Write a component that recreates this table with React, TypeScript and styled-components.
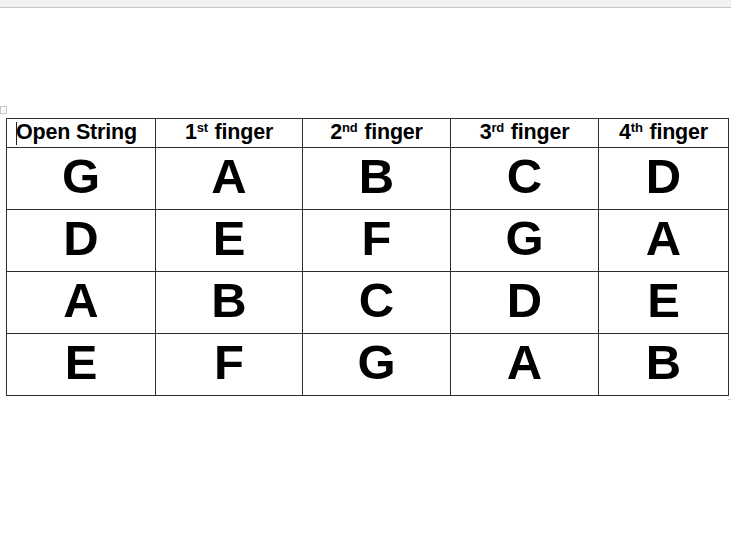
import React from "react";
import styled, { createGlobalStyle } from "styled-components";

const GlobalStyle = createGlobalStyle`
  html, body {
    margin: 0;
    padding: 0;
    background: #ffffff;
  }
  body {
    font-family: "Liberation Sans", Arial, sans-serif;
    color: #000;
  }
`;

const Page = styled.div`
  width: 731px;
  height: 548px;
  background: #ffffff;
  overflow: hidden;
`;

const TopBar = styled.div`
  height: 7px;
  background: #f2f2f2;
  border-bottom: 1px solid #c6c6c6;
`;

const Document = styled.div`
  padding: 110px 0 0 6px;
`;

const TableWrap = styled.div`
  position: relative;
  width: 722px;
`;

const MoveHandle = styled.div`
  position: absolute;
  left: -6px;
  top: -12px;
  width: 5px;
  height: 6px;
  border: 1px solid #c8c8c8;
  background: #fafafa;
`;

const ResizeHandle = styled.div`
  position: absolute;
  right: -4px;
  bottom: -4px;
  width: 3px;
  height: 3px;
  border-right: 1px solid #d0d0d0;
  border-bottom: 1px solid #d0d0d0;
`;

const Table = styled.table`
  border-collapse: collapse;
  table-layout: fixed;
  width: 722px;
`;

const HeaderCell = styled.th<{ $left?: boolean }>`
  position: relative;
  height: 26px;
  padding: 0 0 2px ${(p) => (p.$left ? "9px" : "0")};
  border: 1px solid #2e2e2e;
  font-size: 21.5px;
  font-weight: 700;
  letter-spacing: -0.2px;
  text-align: ${(p) => (p.$left ? "left" : "center")};
  vertical-align: middle;
  line-height: 26px;
  white-space: nowrap;
`;

const Sup = styled.sup`
  font-size: 13px;
  line-height: 0;
  vertical-align: 7px;
  margin-right: 1px;
`;

const Caret = styled.span`
  position: absolute;
  left: 9px;
  top: 3px;
  width: 1px;
  height: 23px;
  background: #222;
`;

const NoteCell = styled.td`
  height: 56px;
  padding: 0 0 5px;
  border: 1px solid #2e2e2e;
  font-size: 49px;
  font-weight: 700;
  text-align: center;
  vertical-align: middle;
  line-height: 56px;
`;

const headers = [
  { num: "", sup: "", label: "Open String" },
  { num: "1", sup: "st", label: " finger" },
  { num: "2", sup: "nd", label: " finger" },
  { num: "3", sup: "rd", label: " finger" },
  { num: "4", sup: "th", label: " finger" },
];

const rows = [
  ["G", "A", "B", "C", "D"],
  ["D", "E", "F", "G", "A"],
  ["A", "B", "C", "D", "E"],
  ["E", "F", "G", "A", "B"],
];

const widths = [149, 147, 148, 148, 130];

const App: React.FC = () => {
  return (
    <Page>
      <GlobalStyle />
      <TopBar />
      <Document>
        <TableWrap>
          <MoveHandle />
          <Table>
            <colgroup>
              {widths.map((w, i) => (
                <col key={i} style={{ width: w }} />
              ))}
            </colgroup>
            <thead>
              <tr>
                {headers.map((h, i) => (
                  <HeaderCell key={i} $left={i === 0}>
                    {i === 0 && <Caret />}
                    {h.num}
                    {h.sup && <Sup>{h.sup}</Sup>}
                    {h.label}
                  </HeaderCell>
                ))}
              </tr>
            </thead>
            <tbody>
              {rows.map((row, r) => (
                <tr key={r}>
                  {row.map((note, c) => (
                    <NoteCell key={c}>{note}</NoteCell>
                  ))}
                </tr>
              ))}
            </tbody>
          </Table>
          <ResizeHandle />
        </TableWrap>
      </Document>
    </Page>
  );
};

export default App;
